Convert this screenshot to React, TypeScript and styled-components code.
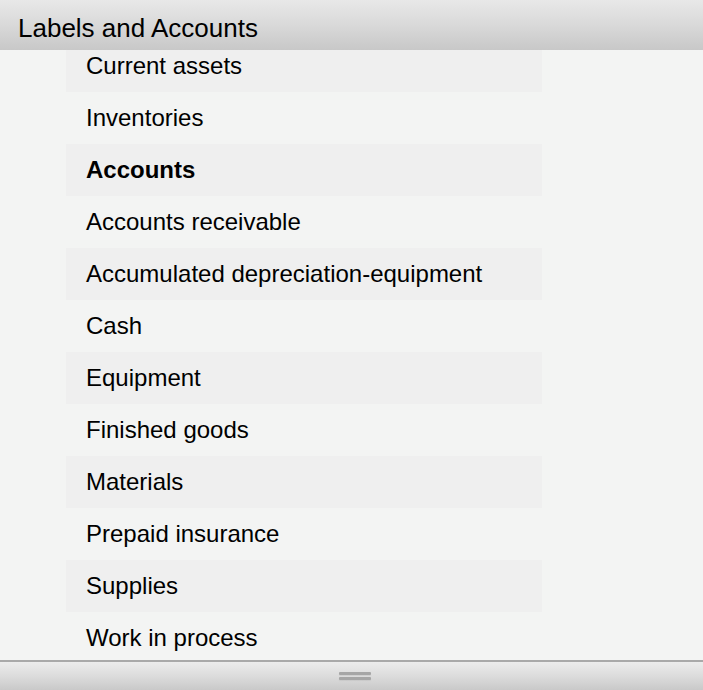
import React from "react";
import styled, { createGlobalStyle } from "styled-components";

const Global = createGlobalStyle`
  html, body { margin: 0; padding: 0; }
  body { font-family: "Liberation Sans", Arial, Helvetica, sans-serif; background: #f3f4f3; }
`;

const Panel = styled.div`
  width: 703px;
  height: 690px;
  display: flex;
  flex-direction: column;
  background: #f3f4f3;
  overflow: hidden;
`;

const Header = styled.div`
  height: 50px;
  flex: none;
  display: flex;
  align-items: center;
  padding: 6px 0 0 18px;
  box-sizing: border-box;
  background: linear-gradient(to bottom, #e8e8e8 0%, #d9d9d9 50%, #c8c8c8 100%);
  font-size: 26px;
  color: #000;
`;

const Body = styled.div`
  flex: 1;
  overflow: hidden;
  position: relative;
`;

const List = styled.ul`
  list-style: none;
  margin: -10px 0 0 66px;
  padding: 0;
  width: 476px;
`;

const Row = styled.li<{ $shaded: boolean; $bold?: boolean }>`
  height: 52px;
  display: flex;
  align-items: center;
  padding-left: 20px;
  box-sizing: border-box;
  background: ${(p) => (p.$shaded ? "#efefef" : "transparent")};
  font-size: 24px;
  font-weight: ${(p) => (p.$bold ? 700 : 400)};
  color: #000;
  white-space: nowrap;
`;

const Footer = styled.div`
  height: 30px;
  flex: none;
  border-top: 2px solid #a9a9a9;
  box-sizing: border-box;
  background: linear-gradient(to bottom, #ececec 0%, #dcdcdc 50%, #c9c9c9 100%);
  display: flex;
  justify-content: center;
  padding-top: 10px;
`;

const Grip = styled.div`
  width: 32px;
  height: 9px;
  margin-left: 6px;
  display: flex;
  flex-direction: column;
  gap: 2px;
`;

const GripBar = styled.div`
  height: 3px;
  background: #a6a6a6;
  border-radius: 1px;
  box-shadow: 0 1px 1px rgba(0, 0, 0, 0.06);
`;

const items: { label: string; bold?: boolean }[] = [
  { label: "Current assets" },
  { label: "Inventories" },
  { label: "Accounts", bold: true },
  { label: "Accounts receivable" },
  { label: "Accumulated depreciation-equipment" },
  { label: "Cash" },
  { label: "Equipment" },
  { label: "Finished goods" },
  { label: "Materials" },
  { label: "Prepaid insurance" },
  { label: "Supplies" },
  { label: "Work in process" },
];

export default function App() {
  return (
    <>
      <Global />
      <Panel>
        <Header>Labels and Accounts</Header>
        <Body>
          <List>
            {items.map((it, i) => (
              <Row key={it.label} $shaded={i % 2 === 0} $bold={it.bold}>
                {it.label}
              </Row>
            ))}
          </List>
        </Body>
        <Footer>
          <Grip>
            <GripBar />
            <GripBar />
          </Grip>
        </Footer>
      </Panel>
    </>
  );
}
